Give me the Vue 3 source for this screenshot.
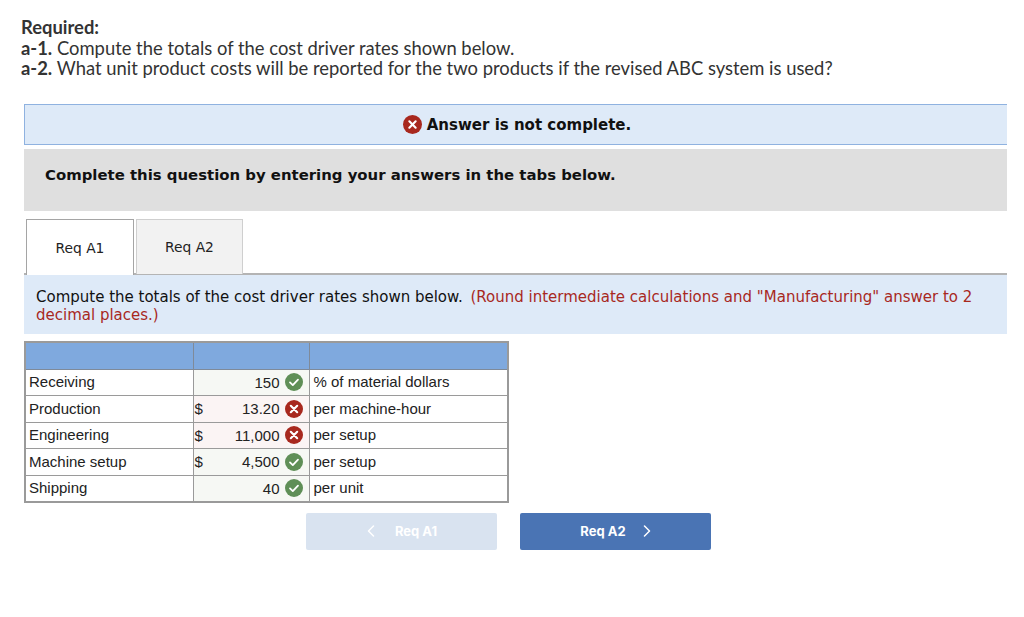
<script setup>
const rows = [
  { name: 'Receiving', dollar: false, value: '150', ok: true, unit: '% of material dollars' },
  { name: 'Production', dollar: true, value: '13.20', ok: false, unit: 'per machine-hour' },
  { name: 'Engineering', dollar: true, value: '11,000', ok: false, unit: 'per setup' },
  { name: 'Machine setup', dollar: true, value: '4,500', ok: true, unit: 'per setup' },
  { name: 'Shipping', dollar: false, value: '40', ok: true, unit: 'per unit' },
]
</script>

<template>
  <main class="page">
    <section class="required">
      <h1>Required:</h1>
      <p><b>a-1.</b> Compute the totals of the cost driver rates shown below.</p>
      <p><b>a-2.</b> What unit product costs will be reported for the two products if the revised ABC system is used?</p>
    </section>

    <div class="status">
      <svg class="mark" viewBox="0 0 18 18" aria-hidden="true">
        <circle cx="9" cy="9" r="9" fill="#a8281e" />
        <path d="M6 6l6 6M12 6l-6 6" stroke="#fff" stroke-width="2" stroke-linecap="round" />
      </svg>
      <strong>Answer is not complete.</strong>
    </div>

    <div class="prompt">Complete this question by entering your answers in the tabs below.</div>

    <nav class="tabs">
      <div class="tab active">Req A1</div>
      <div class="tab">Req A2</div>
    </nav>

    <div class="instruction">
      Compute the totals of the cost driver rates shown below.
      <span class="red">(Round intermediate calculations and "Manufacturing" answer to 2 decimal places.)</span>
    </div>

    <table class="rates">
      <colgroup>
        <col class="c1" />
        <col class="c2" />
        <col class="c3" />
      </colgroup>
      <thead>
        <tr><th></th><th></th><th></th></tr>
      </thead>
      <tbody>
        <tr v-for="row in rows" :key="row.name">
          <td class="label">{{ row.name }}</td>
          <td :class="['answer', row.ok ? 'good' : 'bad']">
            <div class="answer-inner">
              <span class="dollar">{{ row.dollar ? '$' : '' }}</span>
              <span class="value">{{ row.value }}</span>
              <svg class="mark small" viewBox="0 0 18 18" aria-hidden="true">
                <template v-if="row.ok">
                  <circle cx="9" cy="9" r="9" fill="#5f8f57" />
                  <path d="M5 9.4l2.8 2.7L13 6.6" fill="none" stroke="#fff" stroke-width="1.8" stroke-linecap="round" stroke-linejoin="round" />
                </template>
                <template v-else>
                  <circle cx="9" cy="9" r="9" fill="#a8281e" />
                  <path d="M5.8 5.8l6.4 6.4M12.2 5.8l-6.4 6.4" stroke="#fff" stroke-width="2.1" stroke-linecap="round" />
                </template>
              </svg>
            </div>
          </td>
          <td class="label unit">{{ row.unit }}</td>
        </tr>
      </tbody>
    </table>

    <div class="pager">
      <div class="btn disabled">
        <svg class="chev" viewBox="0 0 8 12" aria-hidden="true"><path d="M6.5 1L1.5 6l5 5" /></svg>
        <span>Req A1</span>
      </div>
      <div class="btn primary">
        <span>Req A2</span>
        <svg class="chev" viewBox="0 0 8 12" aria-hidden="true"><path d="M1.5 1l5 5-5 5" /></svg>
      </div>
    </div>
  </main>
</template>

<style scoped>
.page {
  width: 1024px;
  height: 617px;
  box-sizing: border-box;
  padding: 17px 17px 0 24px;
  overflow: hidden;
  background: #fff;
  font-family: "Lato", sans-serif;
  color: #333;
}
.required {
  margin: 0 0 25px -3px;
  font-size: 18.4px;
  line-height: 20.5px;
}
.required h1 {
  margin: 0;
  font-size: 18.4px;
  line-height: 20.5px;
  font-weight: 700;
}
.required p { margin: 0; }
.status {
  display: flex;
  align-items: center;
  justify-content: center;
  gap: 5px;
  height: 41px;
  box-sizing: border-box;
  padding: 1px 0 0 2px;
  background: #deeaf8;
  border: solid #8fb2e0;
  border-width: 1px 0 1px 1px;
  font-family: "DejaVu Sans", sans-serif;
  font-size: 15px;
  color: #111;
}
.mark { width: 19px; height: 19px; flex: none; }
.prompt {
  margin-top: 4px;
  height: 62px;
  box-sizing: border-box;
  padding: 16px 21px 0;
  background: #dfdfdf;
  font-family: "DejaVu Sans", sans-serif;
  font-weight: 700;
  font-size: 14.9px;
  line-height: 20px;
  color: #111;
}
.tabs {
  display: flex;
  gap: 2px;
  margin-top: 8px;
  height: 56px;
  padding-left: 2px;
  border-bottom: 2px solid #b4b4b4;
  box-sizing: border-box;
}
.tab {
  width: 107px;
  height: 55px;
  box-sizing: border-box;
  display: flex;
  align-items: center;
  justify-content: center;
  padding-top: 1px;
  background: #f2f2f2;
  border: 1px solid #cfcfcf;
  border-bottom: 0;
  font-family: "DejaVu Sans", sans-serif;
  font-size: 13.8px;
  color: #222;
}
.tab.active {
  width: 108px;
  background: #fff;
  border: 1px solid #a5a5a5;
  border-bottom: 0;
  position: relative;
  z-index: 1;
  height: 56px;
}
.instruction {
  height: 59px;
  box-sizing: border-box;
  padding: 13px 12px 0;
  background: #deeaf8;
  font-family: "DejaVu Sans", sans-serif;
  font-size: 15px;
  line-height: 18px;
  color: #111;
}
.red { color: #a8281e; margin-left: 3px; }
.rates {
  margin-top: 7px;
  width: 483px;
  table-layout: fixed;
  border-collapse: collapse;
  font-family: "Liberation Sans", sans-serif;
  font-size: 15px;
  color: #222;
  border: 2px solid #9a9a9a;
}
.c1 { width: 168px; }
.c2 { width: 116px; }
.c3 { width: 199px; }
th {
  height: 26px;
  padding: 0;
  background: #7fa9de;
  border: 1px solid #7f8a99;
}
td {
  height: 26.5px;
  padding: 0 3px 1px;
  box-sizing: border-box;
  border: 1px solid #9a9a9a;
  white-space: nowrap;
}
td.unit { padding-left: 4px; }
td.answer { padding: 0 6px 0 1px; }
.good { background: #f6f8f4; }
.bad { background: #fbf4f4; }
.answer-inner {
  display: flex;
  align-items: center;
}
.dollar { width: 12px; }
.value { flex: 1; text-align: right; padding-right: 5px; }
.mark.small { width: 18px; height: 18px; }
.pager {
  display: flex;
  gap: 23px;
  margin: 10px 0 0 282px;
}
.btn {
  width: 190px;
  height: 37px;
  display: flex;
  align-items: center;
  justify-content: center;
  border-radius: 2px;
  font-family: "Inter", sans-serif;
  font-size: 13px;
  font-weight: 700;
  color: #fff;
}
.btn.disabled { background: #d9e3f0; gap: 20px; padding-left: 1px; }
.btn.primary { background: #4a74b4; gap: 17px; width: 191px; }
.chev { width: 8px; height: 12px; flex: none; }
.chev path { fill: none; stroke: #fff; stroke-width: 1.5; stroke-linecap: round; stroke-linejoin: round; }
</style>
